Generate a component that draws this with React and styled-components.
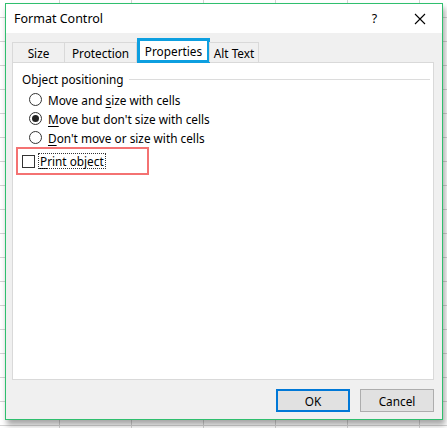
import React from 'react'
import styled, { createGlobalStyle } from 'styled-components'

const GlobalStyle = createGlobalStyle`
  html, body {
    margin: 0;
    padding: 0;
    width: 447px;
    height: 428px;
    overflow: hidden;
  }
  body {
    background-color: #fff;
    background-image:
      repeating-linear-gradient(to right, transparent 0, transparent 29px, #d4d4d4 29px, #d4d4d4 30px, transparent 30px, transparent 72px),
      repeating-linear-gradient(to bottom, transparent 0, transparent 20px, #d4d4d4 20px, #d4d4d4 21px, transparent 21px, transparent 24px);
    background-size: 72px 100%, 100% 24px;
    background-position: 30px 0, 0 -3px;
    font-family: 'Noto Sans', 'Open Sans', sans-serif;
    font-size: 11.8px;
    color: #000;
  }
`

const Dialog = styled.div`
  box-sizing: border-box;
  margin: 3px 0 0 5px;
  width: 438px;
  height: 417px;
  border: 1px solid #2fbf6e;
  background: #f0f0f0;
  display: flex;
  flex-direction: column;
  box-shadow: 2px 5px 6px rgba(0, 0, 0, 0.35);
`

const TitleBar = styled.div`
  height: 29px;
  background: #fff;
  display: flex;
  align-items: center;
  padding-left: 8px;
`

const Title = styled.div`
  flex: 1;
  font-size: 12.5px;
  padding-bottom: 1px;
`

const TitleButton = styled.div`
  width: 45px;
  height: 29px;
  display: flex;
  align-items: center;
  justify-content: center;
  font-size: 12.5px;
`

const Body = styled.div`
  flex: 1;
  display: flex;
  flex-direction: column;
  padding: 5px 8px 8px 6px;
`

const TabStrip = styled.div`
  display: flex;
  align-items: flex-end;
  height: 24px;
  padding-left: 1px;
  position: relative;
  z-index: 1;
`

const Tab = styled.div`
  box-sizing: border-box;
  width: ${({ w }) => w}px;
  height: ${({ selected }) => (selected ? 25 : 20)}px;
  margin-bottom: ${({ selected }) => (selected ? -1 : 0)}px;
  display: flex;
  align-items: center;
  justify-content: center;
  background: ${({ selected }) => (selected ? '#fff' : '#f0f0f0')};
  border: ${({ selected }) => (selected ? '3px solid #0d9fe0' : '1px solid #d9d9d9')};
  border-bottom: ${({ selected }) => (selected ? '3px solid #0d9fe0' : 'none')};
  margin-left: ${({ selected }) => (selected ? 0 : -1)}px;
  padding-top: ${({ selected }) => (selected ? 0 : 1)}px;
`

const Panel = styled.div`
  box-sizing: border-box;
  height: 318px;
  background: #fff;
  border: 1px solid #d9d9d9;
  padding: 7px 3px 0 9px;
`

const GroupHeader = styled.div`
  display: flex;
  align-items: center;
  gap: 5px;
  height: 18px;
`

const GroupLine = styled.div`
  flex: 1;
  height: 1px;
  background: #dcdcdc;
`

const Options = styled.div`
  display: flex;
  flex-direction: column;
  padding: 2px 0 0 7px;
`

const OptionRow = styled.div`
  display: flex;
  align-items: center;
  gap: 6px;
  height: 19px;
`

const Radio = styled.span`
  box-sizing: border-box;
  width: 13px;
  height: 13px;
  border-radius: 50%;
  border: 1px solid #333;
  display: flex;
  align-items: center;
  justify-content: center;
  &::after {
    content: '';
    width: 7px;
    height: 7px;
    border-radius: 50%;
    background: ${({ checked }) => (checked ? '#222' : 'transparent')};
  }
`

const Highlight = styled.div`
  box-sizing: border-box;
  margin: 0 0 0 -13px;
  width: 133px;
  height: 28px;
  border: 2px solid #f47272;
  display: flex;
  align-items: center;
  padding-left: 4px;
  gap: 4px;
`

const CheckBox = styled.span`
  box-sizing: border-box;
  width: 13px;
  height: 13px;
  border: 1px solid #333;
  background: #fff;
`

const FocusLabel = styled.span`
  outline: 1px dotted #333;
  outline-offset: 0;
  padding: 0 1px;
  line-height: 14px;
`

const Footer = styled.div`
  display: flex;
  justify-content: flex-end;
  gap: 10px;
  margin-top: 9px;
`

const Button = styled.div`
  box-sizing: border-box;
  width: 74px;
  height: 23px;
  display: flex;
  align-items: center;
  justify-content: center;
  background: #e1e1e1;
  border: ${({ primary }) => (primary ? '2px solid #0078d7' : '1px solid #adadad')};
`

const Key = styled.u`
  text-underline-offset: 2px;
`

const CloseIcon = () => (
  <svg width="12" height="12" viewBox="0 0 12 12">
    <path d="M1 1 L11 11 M11 1 L1 11" stroke="#000" strokeWidth="1.1" fill="none" />
  </svg>
)

const App = () => (
  <>
    <GlobalStyle />
    <Dialog>
      <TitleBar>
        <Title>Format Control</Title>
        <TitleButton>?</TitleButton>
        <TitleButton>
          <CloseIcon />
        </TitleButton>
      </TitleBar>
      <Body>
        <TabStrip>
          <Tab w={53}>Size</Tab>
          <Tab w={73}>Protection</Tab>
          <Tab w={73} selected>Properties</Tab>
          <Tab w={50}>Alt Text</Tab>
        </TabStrip>
        <Panel>
          <GroupHeader>
            <span>Object positioning</span>
            <GroupLine />
          </GroupHeader>
          <Options>
            <OptionRow>
              <Radio />
              <span>Move and <Key>s</Key>ize with cells</span>
            </OptionRow>
            <OptionRow>
              <Radio checked />
              <span><Key>M</Key>ove but don't size with cells</span>
            </OptionRow>
            <OptionRow>
              <Radio />
              <span><Key>D</Key>on't move or size with cells</span>
            </OptionRow>
            <Highlight>
              <CheckBox />
              <FocusLabel><Key>P</Key>rint object</FocusLabel>
            </Highlight>
          </Options>
        </Panel>
        <Footer>
          <Button primary>OK</Button>
          <Button>Cancel</Button>
        </Footer>
      </Body>
    </Dialog>
  </>
)

export default App
